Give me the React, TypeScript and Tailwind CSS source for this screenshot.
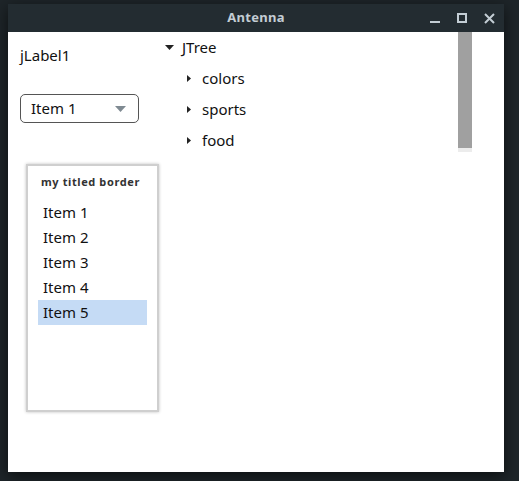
import React from 'react';

const font = { fontFamily: '"Noto Sans", "Open Sans", sans-serif' };

const TreeRow = ({ label, child, open }: { label: string; child?: boolean; open?: boolean }) => (
    <div className={`flex items-center h-[31px] ${child ? 'pl-[22px]' : 'pl-0'}`}>
        {open ? (
            <svg width="9" height="5" viewBox="0 0 9 5" className="mr-[8px]">
                <polygon points="0,0 9,0 4.5,5" fill="#222" />
            </svg>
        ) : (
            <svg width="4" height="7" viewBox="0 0 4 7" className="mr-[11px]">
                <polygon points="0,0 4,3.5 0,7" fill="#222" />
            </svg>
        )}
        <span className="text-[15px] text-[#111]">{label}</span>
    </div>
);

const App = () => {
    return (
        <div className="w-[519px] h-[481px] bg-[#1e2529] pt-[4px] pl-[8px] overflow-hidden" style={font}>
            <div className="w-[496px] shadow-[0_4px_14px_rgba(0,0,0,0.6)]">
                {/* title bar */}
                <div className="relative h-[28px] bg-[#232c31] flex items-center justify-center">
                    <span className="text-[13px] font-bold text-[#c3cdd4] tracking-[0.3px]">Antenna</span>
                    <div className="absolute right-[9px] top-0 h-full flex items-center gap-[17px]">
                        <svg width="10" height="10" viewBox="0 0 10 10">
                            <rect x="0" y="8" width="10" height="2" fill="#c3cdd4" />
                        </svg>
                        <svg width="10" height="10" viewBox="0 0 10 10">
                            <rect x="1" y="1" width="8" height="8" fill="none" stroke="#c3cdd4" strokeWidth="2" />
                        </svg>
                        <svg width="11" height="11" viewBox="0 0 11 11">
                            <path d="M1 1 L10 10 M10 1 L1 10" stroke="#c3cdd4" strokeWidth="2" />
                        </svg>
                    </div>
                </div>

                {/* content */}
                <div className="h-[440px] bg-white flex">
                    {/* left column */}
                    <div className="w-[157px] pl-[12px]">
                        <div className="mt-[13px] h-[20px] text-[15px] text-[#111] leading-[20px]">jLabel1</div>
                        <div className="mt-[29px] w-[119px] h-[29px] border border-[#555] rounded-[5px] flex items-center justify-between pl-[10px] pr-[12px]">
                            <span className="text-[15px] text-[#111]">Item 1</span>
                            <svg width="11" height="6" viewBox="0 0 11 6">
                                <polygon points="0,0 11,0 5.5,6" fill="#7f8a92" />
                            </svg>
                        </div>
                        <div className="mt-[41px] ml-[6px] w-[133px] h-[248px] border-2 border-[#cfcfcf] shadow-[0_0_3px_rgba(0,0,0,0.25)] px-[10px]">
                            <div className="mt-[8px] pl-[3px] text-[11px] font-bold text-[#333] tracking-[0.6px]">my titled border</div>
                            <div className="mt-[9px] flex flex-col">
                                {['Item 1', 'Item 2', 'Item 3', 'Item 4', 'Item 5'].map((item, i) => (
                                    <div
                                        key={item}
                                        className={`h-[25px] pl-[5px] flex items-center text-[15px] text-[#111] ${i === 4 ? 'bg-[#c5dbf5]' : ''}`}
                                    >
                                        {item}
                                    </div>
                                ))}
                            </div>
                        </div>
                    </div>

                    {/* tree */}
                    <div className="w-[293px]">
                        <TreeRow label="JTree" open />
                        <TreeRow label="colors" child />
                        <TreeRow label="sports" child />
                        <TreeRow label="food" child />
                    </div>

                    {/* scrollbar */}
                    <div className="w-[14px] flex flex-col">
                        <div className="h-[116px] bg-[#a0a0a0]" />
                        <div className="h-[4px] bg-[#ececec]" />
                    </div>
                </div>
            </div>
        </div>
    );
};

export default App;
